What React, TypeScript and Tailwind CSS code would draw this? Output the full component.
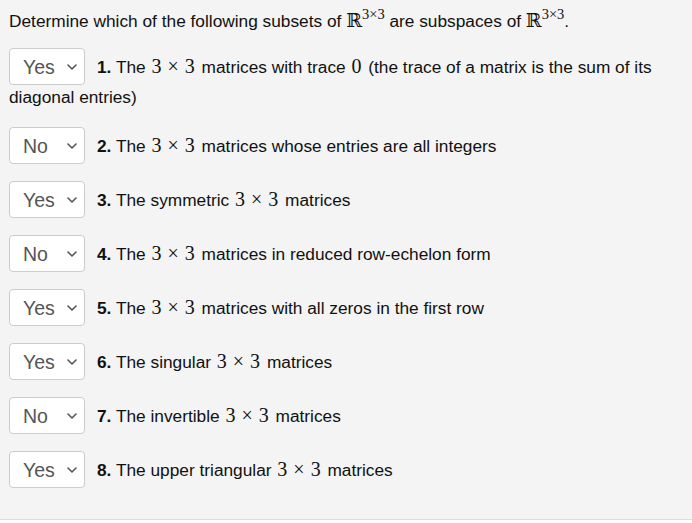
import React from "react";

const M = ({ children }: { children: React.ReactNode }) => (
  <span className="ml-[1px] mr-[2px] text-[20px]" style={{ fontFamily: '"Liberation Serif", "DejaVu Serif", serif' }}>{children}</span>
);

const T = () => (
  <M>
    3<span className="mx-[6px]">×</span>3
  </M>
);

const R33 = () => (
  <span className="whitespace-nowrap leading-none">
    <span className="text-[19px]" style={{ fontFamily: '"DejaVu Serif", serif' }}>ℝ</span>
    <sup className="relative -top-[1px] text-[14.5px] leading-none" style={{ fontFamily: '"Liberation Serif", serif', verticalAlign: "super" }}>
      3×3
    </sup>
  </span>
);

const Select = ({ value }: { value: string }) => (
  <span className="mr-[12px] inline-flex h-[37px] w-[76px] items-center justify-between rounded-[4px] border border-[#cccccc] bg-white pl-[13px] pr-[5px] align-middle text-[19.5px] text-[#555555]">
    <span>{value}</span>
    <svg width="12" height="8" viewBox="0 0 12 8" className="mr-[1px]">
      <path d="M2 2 L6 6 L10 2" fill="none" stroke="#555" strokeWidth="1.6" strokeLinecap="round" strokeLinejoin="round" />
    </svg>
  </span>
);

const items: { v: string; n: string; body: React.ReactNode }[] = [
  {
    v: "Yes",
    n: "1.",
    body: (
      <>
        The <T /> matrices with trace <M>0</M> (the trace of a matrix is the sum of its diagonal entries)
      </>
    ),
  },
  { v: "No", n: "2.", body: <>The <T /> matrices whose entries are all integers</> },
  { v: "Yes", n: "3.", body: <>The symmetric <T /> matrices</> },
  { v: "No", n: "4.", body: <>The <T /> matrices in reduced row-echelon form</> },
  { v: "Yes", n: "5.", body: <>The <T /> matrices with all zeros in the first row</> },
  { v: "Yes", n: "6.", body: <>The singular <T /> matrices</> },
  { v: "No", n: "7.", body: <>The invertible <T /> matrices</> },
  { v: "Yes", n: "8.", body: <>The upper triangular <T /> matrices</> },
];

export default function App() {
  return (
    <div
      className="h-[520px] w-[692px] border-b border-[#dddddd] bg-[#f4f4f4] px-[9px] text-[17.3px] leading-[22px] text-[#111111]"
      style={{ fontFamily: '"Liberation Sans", Arial, sans-serif' }}
    >
      <p className="h-[31px] pt-[8px]">
        Determine which of the following subsets of <R33 /> are subspaces of <R33 />.
      </p>
      <div className="mt-[17px] flex flex-col gap-[17px]">
        {items.map((it, i) => (
          <div key={it.n} className={i === 0 ? "pb-[2px]" : ""}>
            <Select value={it.v} />
            <span className="align-middle">
              <b>{it.n}</b> {it.body}
            </span>
          </div>
        ))}
      </div>
    </div>
  );
}
